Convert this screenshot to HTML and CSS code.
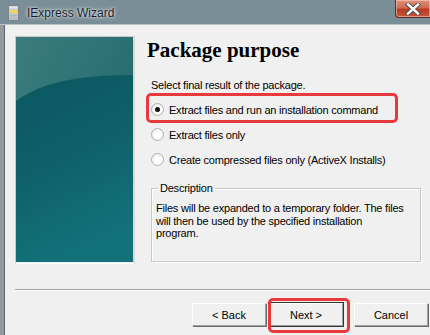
FILE: index.html
```html
<!DOCTYPE html>
<html>
<head>
<meta charset="utf-8">
<link rel="stylesheet" href="styles.css">
</head>
<body>
<div class="window">
  <div class="titlebar">
    <svg class="appicon" width="11" height="16" viewBox="0 0 11 16">
      <rect x="0.5" y="0.5" width="10" height="15" fill="#c9cdd0" stroke="#7d8488"/>
      <rect x="1.5" y="1.5" width="8" height="2" fill="#e6e8ea"/>
      <rect x="1.5" y="5" width="8" height="3" fill="#f1d35a"/>
      <rect x="1.5" y="9.5" width="8" height="2" fill="#b3b8bb"/>
      <rect x="1.5" y="12.5" width="8" height="2" fill="#b3b8bb"/>
    </svg>
    <span class="title">IExpress Wizard</span>
    <div class="close">
      <svg width="18" height="12" viewBox="0 0 18 12">
        <path d="M4 1.5 L14 10.5 M14 1.5 L4 10.5" stroke="#4a4a4a" stroke-width="4.2" stroke-linecap="square"/>
        <path d="M4 1.5 L14 10.5 M14 1.5 L4 10.5" stroke="#ffffff" stroke-width="2.4" stroke-linecap="square"/>
      </svg>
    </div>
  </div>
  <div class="frame">
    <div class="leftedge"></div>
    <div class="client">
      <div class="main">
        <div class="banner">
          <svg width="117" height="225" viewBox="0 0 117 225" preserveAspectRatio="none">
            <defs>
              <linearGradient id="gTop" x1="0" y1="0" x2="1" y2="1">
                <stop offset="0" stop-color="#3c7c7e"/>
                <stop offset="1" stop-color="#1d6367"/>
              </linearGradient>
              <linearGradient id="gBot" x1="0" y1="0" x2="0.3" y2="1">
                <stop offset="0" stop-color="#0b5760"/>
                <stop offset="0.5" stop-color="#0e6068"/>
                <stop offset="1" stop-color="#137179"/>
              </linearGradient>
            </defs>
            <rect width="117" height="225" fill="url(#gTop)"/>
            <path d="M0 64 C 25 46, 60 38, 117 38 L117 225 L0 225 Z" fill="url(#gBot)"/>
          </svg>
        </div>
        <div class="pane">
          <h1 class="heading">Package purpose</h1>
          <p class="prompt">Select final result of the package.</p>
          <div class="options">
            <label class="option"><span class="radio checked"></span>Extract files and run an installation command</label>
            <label class="option"><span class="radio"></span>Extract files only</label>
            <label class="option"><span class="radio"></span>Create compressed files only (ActiveX Installs)</label>
          </div>
          <fieldset class="group">
            <legend>Description</legend>
            <p>Files will be expanded to a temporary folder. The files will then be used by the specified installation<br>program.</p>
          </fieldset>
        </div>
      </div>
      <div class="separator"></div>
      <div class="buttons">
        <button class="btn">&lt; Back</button>
        <button class="btn default">Next &gt;</button>
        <button class="btn">Cancel</button>
      </div>
    </div>
  </div>
  <div class="mark mark-option"></div>
  <div class="mark mark-next"></div>
</div>
</body>
</html>
```
FILE: styles.css
```css
* { box-sizing: border-box; }
html, body { margin: 0; padding: 0; }
body { width: 430px; height: 335px; overflow: hidden; background: #f0f0f0; }
.window {
  position: relative;
  width: 430px;
  height: 335px;
  background: #7a8e97;
  display: flex;
  flex-direction: column;
  font-family: "Liberation Sans", Arial, sans-serif;
}
.titlebar {
  height: 25px;
  display: flex;
  align-items: center;
  padding-left: 8px;
  border-bottom: 1px solid #b8c4ca;
  flex: none;
}
.appicon { margin-top: 1px; }
.title {
  margin-left: 8px;
  font-family: "Liberation Sans", Arial, sans-serif;
  font-size: 12px;
  color: #1a1a2a;
  text-shadow: 0 0 4px #e9eef0, 0 0 2px #e9eef0;
  margin-top: 1px;
}
.close {
  margin-left: auto;
  align-self: flex-start;
  width: 36px;
  height: 18px;
  margin-right: -1px;
  border: 1px solid #5a2a22;
  border-top: none;
  border-radius: 0 0 0 4px;
  background: linear-gradient(#e0907c 0%, #cf6a52 45%, #b73c24 55%, #c5563a 100%);
  box-shadow: inset 0 0 0 1px rgba(255,220,210,0.5);
  display: flex;
  align-items: center;
  justify-content: center;
}
.frame {
  flex: 1;
  display: flex;
}
.leftedge {
  width: 5px;
  background: #969997;
  border-right: 1px solid #56667a;
  flex: none;
}
.client {
  flex: 1;
  background: #f0f0f0;
  display: flex;
  flex-direction: column;
  padding: 11px 0 0 10px;
}
.main {
  display: flex;
  height: 228px;
}
.banner {
  width: 120px;
  height: 228px;
  border: 1px solid #c8c8c8;
  border-right: 2px solid #d8d8d8;
  border-bottom-color: #ffffff;
  flex: none;
}
.banner svg { display: block; }
.pane {
  margin-left: 12px;
  flex: 1;
  display: flex;
  flex-direction: column;
  letter-spacing: -0.22px;
}
.heading {
  margin: 2px 0 0 0;
  font-family: "Liberation Serif", "Times New Roman", serif;
  font-weight: bold;
  font-size: 21px;
  line-height: 24px;
  letter-spacing: 0;
  color: #000;
}
.prompt {
  margin: 17px 0 0 4px;
  font-size: 11px;
  line-height: 13px;
  color: #000;
}
.options {
  display: flex;
  flex-direction: column;
  margin-top: 5px;
  margin-left: 4px;
}
.option {
  display: flex;
  align-items: center;
  height: 25px;
  font-size: 11px;
  color: #000;
}
.radio {
  width: 13px;
  height: 13px;
  border-radius: 50%;
  border: 1px solid #b0b0b0;
  background: radial-gradient(circle at 60% 65%, #ffffff 30%, #e8e8e8 100%);
  margin-right: 5px;
  margin-left: 0;
  position: relative;
  flex: none;
}
.radio.checked::after {
  content: "";
  position: absolute;
  left: 3px;
  top: 3px;
  width: 5px;
  height: 5px;
  border-radius: 50%;
  background: #111;
}
.group {
  margin: 10px 9px 0 4px;
  height: 80px;
  border: 1px solid #c8c8c8;
  box-shadow: 1px 1px 0 #fff, inset 1px 1px 0 #fff;
  padding: 0 4px;
}
.group legend {
  font-size: 11px;
  padding: 0 2px;
  margin-left: 2px;
  color: #000;
}
.group p {
  margin: 8px 0 0 0;
  font-size: 11px;
  line-height: 12.5px;
  color: #000;
}
.separator {
  margin-top: 25px;
  height: 2px;
  border-top: 1px solid #a0a0a0;
  border-bottom: 1px solid #ffffff;
}
.buttons {
  display: flex;
  justify-content: flex-end;
  gap: 3px;
  margin-top: 12px;
  padding-right: 2px;
}
.btn {
  width: 74px;
  height: 23px;
  font-family: "Liberation Sans", Arial, sans-serif;
  font-size: 11px;
  color: #000;
  background: #f0f0f0;
  border: 1px solid;
  border-color: #ffffff #a0a0a0 #a0a0a0 #ffffff;
  box-shadow: 1px 1px 0 #696969;
  padding: 0;
}
.btn.default {
  outline: 1px solid #333;
}
.btn + .btn + .btn { margin-left: 8px; }
.mark {
  position: absolute;
  border: 3px solid #e8393d;
  border-radius: 5px;
}
.mark-option { left: 146px; top: 93px; width: 252px; height: 30px; }
.mark-next { left: 268px; top: 298px; width: 82px; height: 35px; }
```
